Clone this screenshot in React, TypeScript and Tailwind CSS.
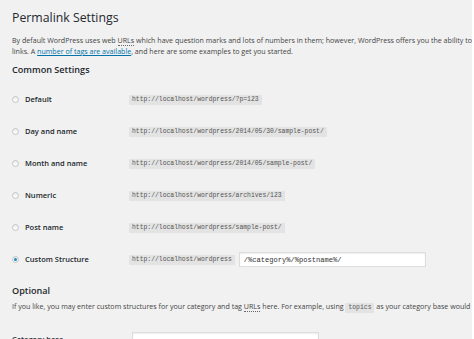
import React from "react";

const rows = [
  { label: "Default", url: "http://localhost/wordpress/?p=123" },
  { label: "Day and name", url: "http://localhost/wordpress/2014/05/30/sample-post/" },
  { label: "Month and name", url: "http://localhost/wordpress/2014/05/sample-post/" },
  { label: "Numeric", url: "http://localhost/wordpress/archives/123" },
  { label: "Post name", url: "http://localhost/wordpress/sample-post/" },
];

function Radio({ checked }: { checked?: boolean }) {
  return (
    <span className="flex size-[7px] shrink-0 items-center justify-center rounded-full border border-[#c3c7cb] bg-[#f8f8f8] shadow-[inset_0_1px_1px_rgba(0,0,0,0.08)]">
      {checked && <span className="size-[3px] rounded-full bg-[#1e8cbe]" />}
    </span>
  );
}

function Code({ children }: { children: React.ReactNode }) {
  return (
    <code className="inline-flex h-[10px] items-center bg-[#e3e3e3] px-[3px] font-['Liberation_Mono',monospace] text-[6.4px] leading-none text-[#555]">
      {children}
    </code>
  );
}

function Abbr({ children }: { children: React.ReactNode }) {
  return <span className="border-b border-dotted border-[#666]">{children}</span>;
}

export default function App() {
  return (
    <div className="flex h-[339px] w-[474px] overflow-hidden bg-[#f1f1f1] font-['Open_Sans',sans-serif] text-[#444]">
      <div className="min-w-0 flex-1 overflow-hidden pl-[12px] pt-[10px]">
        <h1 className="whitespace-nowrap text-[12.3px] leading-[16px] font-normal text-[#23282d]">
          Permalink Settings
        </h1>

        <div className="mt-[9px] whitespace-nowrap text-[7.1px] leading-[11.2px]">
          <p>
            By default WordPress uses web <Abbr>URLs</Abbr> which have question marks and lots of numbers in them;
            however, WordPress offers you the ability to create a custom URL structure for your permalinks and
            archives. This can improve the aesthetics, usability, and forward-compatibility of your
          </p>
          <p>
            links. A{" "}
            <a className="text-[#0073aa] underline">number of tags are available</a>, and here are some examples
            to get you started.
          </p>
        </div>

        <h2 className="mt-[6.5px] whitespace-nowrap text-[9.1px] leading-[12px] font-semibold text-[#23282d]">
          Common Settings
        </h2>

        <div className="mt-[8px] flex flex-col">
          {rows.map((r) => (
            <div key={r.label} className="flex h-[32px] items-center">
              <div className="flex w-[117px] items-center gap-[6px]">
                <Radio />
                <span className="text-[7.5px] font-semibold text-[#23282d]">{r.label}</span>
              </div>
              <Code>{r.url}</Code>
            </div>
          ))}
          <div className="flex h-[32px] items-center">
            <div className="flex w-[117px] items-center gap-[6px]">
              <Radio checked />
              <span className="text-[7.5px] font-semibold text-[#23282d]">Custom Structure</span>
            </div>
            <Code>http://localhost/wordpress</Code>
            <div className="ml-[4px] flex h-[15px] w-[187px] items-center border border-[#ddd] bg-white px-[4px] font-['Liberation_Mono',monospace] text-[7.1px] text-[#333] shadow-[inset_0_1px_2px_rgba(0,0,0,0.07)]">
              /%category%/%postname%/
            </div>
          </div>
        </div>

        <h2 className="mt-[9px] whitespace-nowrap text-[9.1px] leading-[12px] font-semibold text-[#23282d]">
          Optional
        </h2>

        <p className="mt-[4px] whitespace-nowrap text-[7.1px] leading-[11.2px]">
          If you like, you may enter custom structures for your category and tag <Abbr>URLs</Abbr> here. For
          example, using <Code>topics</Code> as your category base would make your category links like
          http://example.org/topics/uncategorized/.
        </p>

        <div className="mt-[19px] flex items-start">
          <span className="w-[120px] pt-[2px] text-[7.5px] font-semibold text-[#23282d]">Category base</span>
          <div className="h-[15px] w-[187px] border border-[#ddd] bg-white shadow-[inset_0_1px_2px_rgba(0,0,0,0.07)]" />
        </div>
      </div>
      <div className="w-[2px] shrink-0 bg-white" />
    </div>
  );
}
